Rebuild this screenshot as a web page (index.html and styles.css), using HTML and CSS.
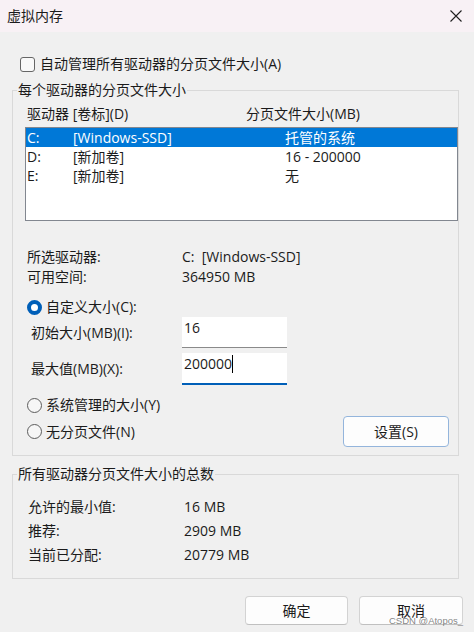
FILE: index.html
```html
<!DOCTYPE html>
<html lang="zh-CN">
<head>
<meta charset="utf-8">
<title>虚拟内存</title>
<link rel="stylesheet" href="styles.css">
</head>
<body>
<div class="window">
  <div class="titlebar">
    <span class="title">虚拟内存</span>
    <svg class="close" width="12" height="12" viewBox="0 0 12 12"><path d="M0.5 0.5L11.5 11.5M11.5 0.5L0.5 11.5" stroke="#1f1f1f" stroke-width="1.1" fill="none"/></svg>
  </div>
  <div class="body">
    <div class="check-row"><span class="checkbox"></span><span>自动管理所有驱动器的分页文件大小(A)</span></div>

    <fieldset class="group group-drives">
      <legend>每个驱动器的分页文件大小</legend>
      <div class="list-head"><span class="head-drive">驱动器 [卷标](D)</span><span>分页文件大小(MB)</span></div>
      <div class="listbox">
        <div class="row selected"><span class="c1">C:</span><span class="c2">[Windows-SSD]</span><span class="c3">托管的系统</span></div>
        <div class="row"><span class="c1">D:</span><span class="c2">[新加卷]</span><span class="c3">16 - 200000</span></div>
        <div class="row"><span class="c1">E:</span><span class="c2">[新加卷]</span><span class="c3">无</span></div>
      </div>
      <div class="info">
        <div class="info-row"><span class="info-label">所选驱动器:</span><span>C:&nbsp; [Windows-SSD]</span></div>
        <div class="info-row"><span class="info-label">可用空间:</span><span>364950 MB</span></div>
      </div>
      <div class="radio-row radio-custom"><span class="radio on"></span><span>自定义大小(C):</span></div>
      <div class="field-row"><span class="field-label">初始大小(MB)(I):</span><div class="input">16</div></div>
      <div class="field-row field-max"><span class="field-label">最大值(MB)(X):</span><div class="input focus">200000<span class="caret"></span></div></div>
      <div class="radio-row radio-system"><span class="radio"></span><span>系统管理的大小(Y)</span></div>
      <div class="radio-row radio-none"><span class="radio"></span><span>无分页文件(N)</span><button class="btn btn-set">设置(S)</button></div>
    </fieldset>

    <fieldset class="group group-total">
      <legend>所有驱动器分页文件大小的总数</legend>
      <div class="totals">
        <div class="total-row"><span class="total-label">允许的最小值:</span><span>16 MB</span></div>
        <div class="total-row"><span class="total-label">推荐:</span><span>2909 MB</span></div>
        <div class="total-row"><span class="total-label">当前已分配:</span><span>20779 MB</span></div>
      </div>
    </fieldset>

    <div class="footer">
      <button class="btn btn-ok">确定</button>
      <button class="btn btn-cancel">取消</button>
    </div>
  </div>
  <div class="watermark">CSDN @Atopos_</div>
</div>
</body>
</html>
```

FILE: styles.css
```css
* { box-sizing: border-box; }
html, body { margin: 0; padding: 0; }
body {
  width: 474px;
  height: 632px;
  overflow: hidden;
  background: #f0f0f0;
  font-family: "Open Sans", "Noto Sans CJK SC", sans-serif;
  font-size: 14px;
  line-height: 18px;
  color: #1b1b1b;
}
.window { position: relative; height: 632px; }

.titlebar {
  height: 32px;
  background: #f8f1f5;
  display: flex;
  align-items: center;
  justify-content: space-between;
  padding: 0 12px 0 7px;
}
.title { font-size: 14px; }

.body { padding: 0 15px 0 12px; }

.check-row {
  display: flex;
  align-items: center;
  gap: 5px;
  height: 18px;
  margin-top: 23px;
  padding-left: 8px;
}
.checkbox {
  width: 15px;
  height: 15px;
  border: 1px solid #666666;
  border-radius: 3px;
  background: #f9f9f9;
}

.group {
  margin: 8px 0 0;
  padding: 0 0 8px 14px;
  border: 1px solid #d9d9d9;
  min-width: 0;
}
.group legend {
  padding: 0 1px;
  margin-left: -10px;
  line-height: 18px;
}
.group-total { margin-top: 9px; padding-bottom: 11px; }

.list-head { display: flex; margin-top: 6px; height: 18px; }
.head-drive { width: 219px; }

.listbox {
  margin: 4px 0 0 -2px;
  height: 94px;
  border: 1px solid #828790;
  background: #ffffff;
}
.row {
  display: flex;
  height: 19px;
  line-height: 19px;
  padding-left: 1px;
}
.row.selected { background: #0078d7; color: #ffffff; }
.c1 { width: 46px; }
.c2 { width: 212px; }

.info { margin-top: 26px; }
.info-row { display: flex; height: 20px; line-height: 20px; }
.info-label { width: 155px; }

.radio-row {
  display: flex;
  align-items: center;
  gap: 4px;
  height: 20px;
}
.radio-custom { margin-top: 10px; }
.radio-system { margin-top: 10px; }
.radio-none { margin-top: 1px; height: 31px; }
.radio {
  width: 15px;
  height: 15px;
  border-radius: 50%;
  border: 1px solid #5c5c5c;
  background: #f6f6f6;
  flex: none;
}
.radio.on {
  border: 4.5px solid #005fb8;
  background: #ffffff;
}

.field-row { display: flex; align-items: center; height: 31px; }
.field-max { margin-top: 5px; height: 32px; }
.field-label { width: 155px; padding-left: 4px; }
.input {
  width: 105px;
  height: 100%;
  background: #ffffff;
  border-bottom: 1px solid #8a8a8a;
  padding: 2px 0 0 2px;
  align-self: stretch;
}
.input.focus { border-bottom: 2px solid #005fb8; }
.caret {
  display: inline-block;
  width: 1px;
  height: 18px;
  background: #000000;
  vertical-align: top;
}

.btn {
  font: inherit;
  color: #1b1b1b;
  background: #fdfdfd;
  border: 1px solid #d3d3d3;
  border-bottom-color: #c0c0c0;
  border-radius: 4px;
  padding: 0;
  cursor: default;
}
.btn-set {
  margin-left: auto;
  margin-right: 9px;
  width: 106px;
  height: 31px;
  border: 1px solid #94b5dc;
}

.totals { margin-top: 12px; }
.total-row { display: flex; height: 24px; line-height: 24px; }
.total-label { width: 157px; padding-left: 1px; }

.footer {
  display: flex;
  justify-content: flex-end;
  gap: 11px;
  margin-top: 17px;
  margin-right: -4px;
}
.btn-ok { width: 103px; height: 29px; }
.btn-cancel { width: 104px; height: 29px; }

.watermark {
  position: absolute;
  right: 11px;
  top: 615px;
  font-family: "Liberation Sans", sans-serif;
  font-size: 9.5px;
  line-height: 11px;
  color: rgba(110, 110, 110, 0.85);
}
```
